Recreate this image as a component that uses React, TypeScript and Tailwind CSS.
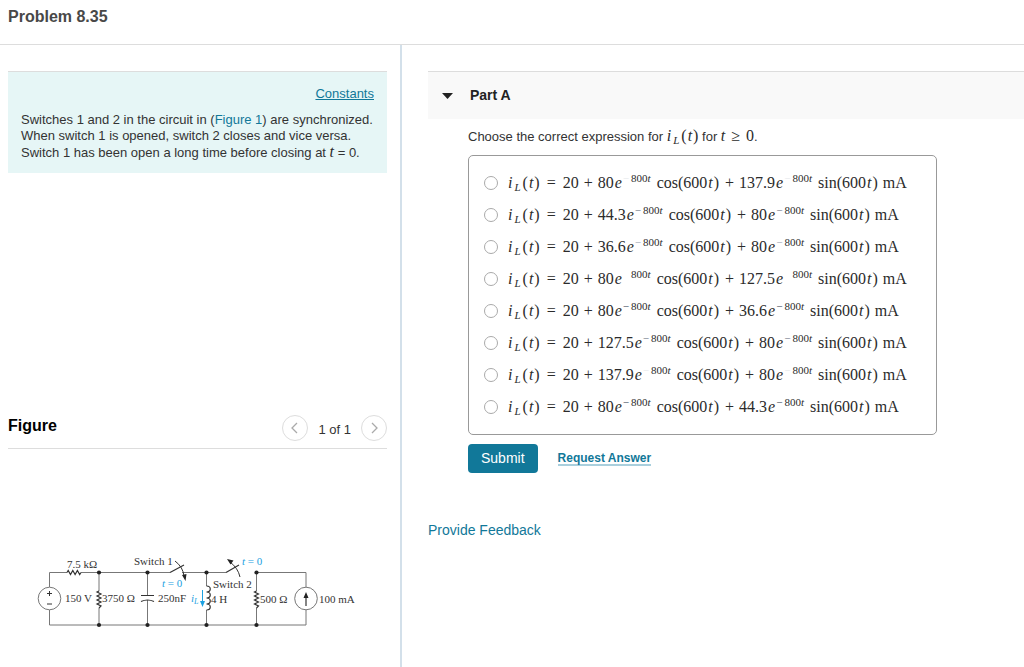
import { useState } from "react";
import type { ReactNode } from "react";

type Choice = {
  id: string;
  cos: string;
  sin: string;
  minus: string;
};

const choices: Choice[] = [
  { id: "a", cos: "80", sin: "137.9", minus: "text-gray-200" },
  { id: "b", cos: "44.3", sin: "80", minus: "text-gray-500" },
  { id: "c", cos: "36.6", sin: "80", minus: "text-gray-400" },
  { id: "d", cos: "80", sin: "127.5", minus: "text-transparent" },
  { id: "e", cos: "80", sin: "36.6", minus: "text-gray-700" },
  { id: "f", cos: "127.5", sin: "80", minus: "text-gray-500" },
  { id: "g", cos: "137.9", sin: "80", minus: "text-gray-200" },
  { id: "h", cos: "80", sin: "44.3", minus: "text-gray-700" },
];

function MathText({ children }: { children: ReactNode }) {
  return (
    <span className="font-['Liberation_Serif',serif] text-[16px] leading-4 whitespace-nowrap text-[#2b2b2b]">
      {children}
    </span>
  );
}

function Current() {
  return (
    <>
      <i className="pr-0.5">i</i>
      <sub className="bottom-[-3px] pr-0.5 text-[11px] italic">L</sub>
      (<i className="px-px">t</i>)
    </>
  );
}

function Decay({ minus }: { minus: string }) {
  return (
    <>
      <i className="pl-px">e</i>
      <sup className="top-[-6px] pr-1.5 text-[11px]">
        <span className={`pr-0.5 pl-px ${minus}`}>−</span>800<i>t</i>
      </sup>
    </>
  );
}

function Angle() {
  return (
    <>
      (600<i className="px-px">t</i>
      <span className="pr-px">)</span>
    </>
  );
}

function Plus() {
  return <span className="px-[5px]">+</span>;
}

function Expression({ choice }: { choice: Choice }) {
  return (
    <MathText>
      <Current />
      <span className="px-[7px]">=</span>
      20
      <Plus />
      {choice.cos}
      <Decay minus={choice.minus} />
      cos
      <Angle />
      <Plus />
      {choice.sin}
      <Decay minus={choice.minus} />
      sin
      <Angle />
      <span className="pl-1">mA</span>
    </MathText>
  );
}

function Circuit() {
  return (
    <svg
      viewBox="0 0 340 90"
      className="mt-[101px] ml-[22px] h-[90px] w-[340px]"
      role="img"
      aria-label="Circuit with two synchronized switches"
    >
      {/* wires */}
      <g fill="none" stroke="#777">
        <path d="M19.5 37V22.5H37M51 22.5h89M152 22.5h44M226 22.5h50V37M276 60v15H19.5V60" />
        <path d="M69 22.5V41M69 58v17M117.500 22.5V45M117.500 50V75" />
        <path d="M226.500 22.5V41M226.500 58v17M176.500 22.5V36M176.500 60V75" />
        <circle cx="19.5" cy="48.5" r="11.3" />
        <circle cx="276" cy="48.5" r="11.3" />
      </g>
      {/* components */}
      <g fill="none" stroke="#333" strokeWidth="1.2">
        <path d="M37 22.5l1.2-2 2.3 4 2.3-4 2.3 4 2.3-4 2.3 4 1.3-2" />
        <path d="M69 41l-2 1 4 2-4 2 4 2-4 2 4 2-4 2 4 2-2 2" />
        <path d="M226.5 41l-2 1 4 2-4 2 4 2-4 2 4 2-4 2 4 2-2 2" />
        <path d="M176.5 36c5 0 5 6 0 6c5 0 5 6 0 6c5 0 5 6 0 6c5 0 5 6 0 6" />
        <path d="M111 45.5h13M111 51.5q6.5-3 13 0" />
        <path d="M140 22.5l14-7.5M196 22.5l13-7.5" />
        <path d="M145 11q8 6 9 15M210 27q-2-9-10-15" strokeWidth="1" />
        <path d="M17 43.500h5M19.500 41v5M17 54h5" strokeWidth="1" />
        <path d="M276 56V45" />
      </g>
      <g fill="#222">
        <circle cx="69" cy="22.5" r="2.1" />
        <circle cx="117.5" cy="22.5" r="2.1" />
        <circle cx="176.5" cy="22.5" r="2.1" />
        <circle cx="226.5" cy="22.5" r="2.1" />
        <circle cx="69" cy="75" r="2.1" />
        <circle cx="117.5" cy="75" r="2.1" />
        <circle cx="176.5" cy="75" r="2.1" />
        <circle cx="226.5" cy="75" r="2.1" />
        <path d="M155.5 31l-3.500-6 4.500-1zM197 9l6.500 1.500-3 4zM276 42l2.500 6h-5z" />
      </g>
      <path d="M172.5 40v12" stroke="#1ba1e2" />
      <path d="M172.5 57l-2.5-6h5z" fill="#1ba1e2" />
      <g className="font-['Liberation_Serif',serif] text-[11px]" fill="#333">
        <text x="37" y="18">7.5 kΩ</text>
        <text x="104" y="15">Switch 1</text>
        <text x="35" y="52">150 V</text>
        <text x="72" y="52">3750 Ω</text>
        <text x="128" y="52">250nF</text>
        <text x="183" y="38">Switch 2</text>
        <text x="181" y="53">4 H</text>
        <text x="230" y="53">500 Ω</text>
        <text x="289" y="53">100 mA</text>
      </g>
      <g className="font-['Liberation_Serif',serif] text-[11px]" fill="#1ba1e2">
        <text x="132" y="37"><tspan fontStyle="italic">t</tspan> = 0</text>
        <text x="212" y="15"><tspan fontStyle="italic">t</tspan> = 0</text>
        <text x="161" y="52" fontStyle="italic">i</text>
        <text x="164" y="54" fontStyle="italic" className="text-[8px]">L</text>
      </g>
    </svg>
  );
}

function PagerButton({ label, path }: { label: string; path: string }) {
  return (
    <button
      aria-label={label}
      className="flex size-[26px] items-center justify-center rounded-full border border-[#ddd] bg-white"
    >
      <svg viewBox="0 0 12 12" className="size-3" fill="none" stroke="#aaa" strokeWidth="1.3">
        <path d={path} />
      </svg>
    </button>
  );
}

export default function App() {
  const [answer, setAnswer] = useState("");
  const [open, setOpen] = useState(true);

  return (
    <div className="flex min-h-screen flex-col bg-white font-['Liberation_Sans',Arial,sans-serif] text-[#333]">
      <header className="border-b border-[#ddd] px-2 pt-[5px] pb-[15px]">
        <h1 className="text-[16px] leading-6 font-bold text-[#484848]">Problem 8.35</h1>
      </header>

      <main className="flex grow">
        <section className="w-[402px] shrink-0 border-r-2 border-[#d3e0ea] pt-[26px] pr-[13px] pl-2">
          <div className="border-t border-[#ddd] bg-[#e6f6f6] px-[13px] pt-[14px] pb-3 text-[13px] leading-4">
            <div className="mb-2.5 text-right">
              <a href="#constants" className="text-[#117899] underline">
                Constants
              </a>
            </div>
            <p className="whitespace-nowrap">
              Switches 1 and 2 in the circuit in (
              <a href="#figure" className="text-[#117899]">Figure 1</a>) are synchronized.
              <br />
              When switch 1 is opened, switch 2 closes and vice versa.
              <br />
              Switch 1 has been open a long time before closing at{" "}
              <MathText><i>t</i></MathText> = 0.
            </p>
          </div>

          <div id="figure" className="mt-[242px] flex h-[34px] items-start border-b border-[#ddd]">
            <h2 className="mr-auto text-[16px] leading-[22px] font-bold text-black">Figure</h2>
            <div className="flex items-center text-[13px]">
              <PagerButton label="Previous figure" path="M8 1L3 6L8 11" />
              <span className="px-2.5 pt-1">1 of 1</span>
              <PagerButton label="Next figure" path="M4 1L9 6L4 11" />
            </div>
          </div>
          <Circuit />
        </section>

        <section className="grow pt-[26px] pl-[26px]">
          <div className="border-t border-[#ddd] bg-[#f9f9f9]">
            <button
              onClick={() => setOpen(!open)}
              aria-expanded={open}
              className="flex h-[47px] items-center gap-[17px] pl-[14px] text-[14px] font-bold text-[#222]"
            >
              <svg viewBox="0 0 11 6" className="h-1.5 w-[11px]" fill="#222">
                <path d="M0 0h11L5.5 6z" />
              </svg>
              Part A
            </button>
          </div>

          {open && (
            <form className="pl-10" onSubmit={(e) => e.preventDefault()}>
              <p className="pt-[9px] text-[13px] leading-[18px] whitespace-nowrap">
                Choose the correct expression for{" "}
                <MathText><Current /></MathText> for{" "}
                <MathText><i>t</i> <span className="px-0.5">≥</span> 0</MathText>.
              </p>

              <fieldset className="mt-[9px] w-[469px] max-w-full rounded-[5px] border border-[#999] py-[11px] pl-[15px]">
                {choices.map((choice) => (
                  <label key={choice.id} className="flex h-8 items-center">
                    <input
                      type="radio"
                      name="answer"
                      value={choice.id}
                      checked={answer === choice.id}
                      onChange={() => setAnswer(choice.id)}
                      className="mr-2.5 size-[14px] appearance-none rounded-full border border-[#aaa] bg-white checked:border-4 checked:border-[#117899]"
                    />
                    <Expression choice={choice} />
                  </label>
                ))}
              </fieldset>

              <div className="mt-[9px] flex items-center gap-5">
                <button type="submit" className="h-[29px] rounded-sm bg-[#117899] px-[13px] text-[14px] text-white">
                  Submit
                </button>
                <a href="#answer" className="border-b-2 border-[#a9cfdd] text-[12px] leading-3 font-bold text-[#117899]">
                  Request Answer
                </a>
              </div>
            </form>
          )}

          <a href="#feedback" className="mt-[47px] inline-block text-[14px] leading-5 text-[#117899]">
            Provide Feedback
          </a>
        </section>
      </main>
    </div>
  );
}
